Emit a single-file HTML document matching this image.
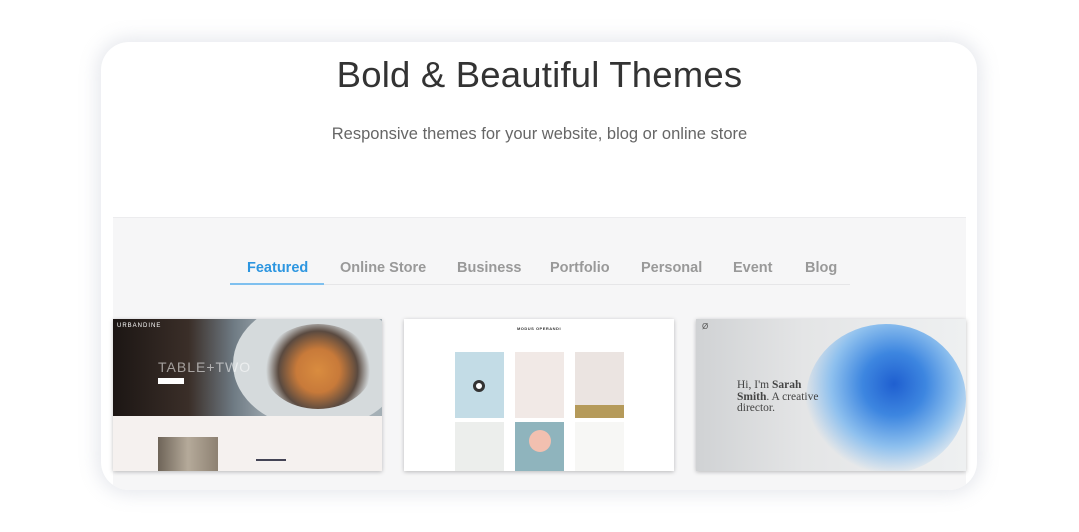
<!DOCTYPE html>
<html><head><meta charset="utf-8"><style>
*{margin:0;padding:0;box-sizing:border-box}
body{width:1079px;height:532px;background:#fff;position:relative;overflow:hidden;font-family:"Liberation Sans",sans-serif}
.card{position:absolute;left:101px;top:42px;width:876px;height:448px;background:#fff;border-radius:28px;box-shadow:0 0 18px 4px rgba(200,205,215,.45);overflow:hidden}
h1{position:absolute;left:0;width:1079px;top:54px;text-align:center;font-size:36.5px;font-weight:400;color:#333;letter-spacing:.2px}
.sub{position:absolute;left:0;width:1079px;top:125px;text-align:center;font-size:16.5px;color:#666}
.gray{position:absolute;left:12px;top:175px;width:853px;height:300px;background:#f6f6f7;border-top:1px solid #ececee}
.tabs{position:absolute;top:260px;font-size:14.5px;font-weight:bold;color:#999}
.tabs span{position:absolute;white-space:nowrap}
.line{position:absolute;left:230px;top:284px;width:620px;height:1px;background:#e6e6e8}
.uline{position:absolute;left:230px;top:283px;width:94px;height:2px;background:#7fc0ef}
.th{position:absolute;top:319px;height:152px;box-shadow:0 1px 4px rgba(0,0,0,.25);overflow:hidden}
</style></head><body>
<div class="card"><div class="gray"></div></div>
<h1>Bold &amp; Beautiful Themes</h1>
<div class="sub">Responsive themes for your website, blog or online store</div>
<div class="line"></div><div class="uline"></div>
<div class="tabs">
<span style="left:247px;color:#2d96e0">Featured</span>
<span style="left:340px">Online Store</span>
<span style="left:457px">Business</span>
<span style="left:550px">Portfolio</span>
<span style="left:641px">Personal</span>
<span style="left:733px">Event</span>
<span style="left:805px">Blog</span>
</div>
<!-- thumb 1 -->
<div class="th" style="left:113px;width:269px;background:#f5f1ef">
 <div style="position:absolute;left:0;top:0;width:269px;height:97px;overflow:hidden;background:linear-gradient(90deg,#1c1614 0%,#3a2e28 28%,#6f7b84 45%,#b7c1c7 65%,#a4afb5 100%)">
  <div style="position:absolute;left:120px;top:-20px;width:170px;height:130px;border-radius:50%;background:#d5dadc"></div>
  <div style="position:absolute;left:150px;top:5px;width:110px;height:85px;border-radius:50%;background:radial-gradient(circle at 50% 55%,#d98c3f 0%,#c87a3a 30%,#5a4a40 55%,rgba(200,200,200,0) 72%)"></div>
  <div style="position:absolute;left:4px;top:4px;color:#fff;font-size:6px;letter-spacing:1px">URBANDINE</div>
  <div style="position:absolute;left:45px;top:40px;color:rgba(255,255,255,.55);font-size:14px;letter-spacing:1px">TABLE+TWO</div>
  <div style="position:absolute;left:45px;top:59px;width:26px;height:6px;background:#fff"></div>
 </div>
 <div style="position:absolute;left:45px;top:118px;width:60px;height:34px;background:linear-gradient(90deg,#6e6458,#b5aa9a,#8d8172)"></div>
 <div style="position:absolute;left:143px;top:140px;width:30px;height:2px;background:#445"></div>
</div>
<!-- thumb 2 -->
<div class="th" style="left:404px;width:270px;background:#fff">
 <div style="position:absolute;left:0;width:270px;top:7px;text-align:center;font-size:4px;font-weight:bold;color:#333;letter-spacing:.5px">MODUS OPERANDI</div>
 <div style="position:absolute;left:51px;top:33px;width:49px;height:66px;background:#c3dce6"><div style="position:absolute;left:18px;top:28px;width:12px;height:12px;border-radius:50%;background:#fff;border:3px solid #333"></div></div>
 <div style="position:absolute;left:111px;top:33px;width:49px;height:66px;background:#f1e9e6"></div>
 <div style="position:absolute;left:171px;top:33px;width:49px;height:66px;background:linear-gradient(#ebe4e1 80%,#b59a5a 80%)"></div>
 <div style="position:absolute;left:51px;top:103px;width:49px;height:49px;background:#eceeec"></div>
 <div style="position:absolute;left:111px;top:103px;width:49px;height:49px;background:#8fb4bd"><div style="position:absolute;left:14px;top:8px;width:22px;height:22px;border-radius:50%;background:#f2c0b0"></div></div>
 <div style="position:absolute;left:171px;top:103px;width:49px;height:49px;background:#f7f7f5"></div>
</div>
<!-- thumb 3 -->
<div class="th" style="left:696px;width:270px;background:linear-gradient(90deg,#d0d2d4,#e4e5e6 40%,#eef0f1)">
 <div style="position:absolute;left:110px;top:5px;width:160px;height:150px;border-radius:50%;background:radial-gradient(circle at 55% 40%,#1f5fd0 0%,#3d86e0 25%,#8ec0ee 50%,rgba(220,235,248,0) 72%)"></div>
 <div style="position:absolute;left:41px;top:61px;font-family:'Liberation Serif',serif;font-size:11.5px;line-height:11.5px;color:#444">Hi, I'm <b>Sarah<br>Smith</b>. A creative<br>director.</div>
 <div style="position:absolute;left:6px;top:3px;font-size:8px;color:#555">Ø</div>
</div>
</body></html>
